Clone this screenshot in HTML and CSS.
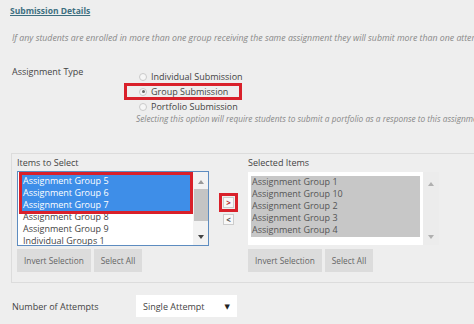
FILE: index.html
```html
<!DOCTYPE html>
<html>
<head>
<meta charset="utf-8">
<link rel="stylesheet" href="styles.css">
</head>
<body>
<div class="page">
  <div class="title"><a>Submission Details</a></div>
  <div class="intro">If any students are enrolled in more than one group receiving the same assignment they will submit more than one attempt for this assignment.</div>

  <div class="type-row">
    <div class="type-label">Assignment Type</div>
    <div class="options">
      <div class="opt"><span class="radio"></span>Individual Submission</div>
      <div class="opt sel"><span class="radio on"></span>Group Submission</div>
      <div class="opt"><span class="radio"></span>Portfolio Submission</div>
      <div class="hint">Selecting this option will require students to submit a portfolio as a response to this assignment.</div>
    </div>
  </div>

  <div class="panel">
    <div class="col">
      <div class="col-label">Items to Select</div>
      <div class="list left">
        <div class="items">
          <div class="hl-group">
            <div class="item hl">Assignment Group 5</div>
            <div class="item hl">Assignment Group 6</div>
            <div class="item hl">Assignment Group 7</div>
          </div>
          <div class="item">Assignment Group 8</div>
          <div class="item">Assignment Group 9</div>
          <div class="item">Individual Groups 1</div>
        </div>
        <div class="scroll">
          <span class="up"></span>
          <span class="thumb"></span>
          <span class="down dark"></span>
        </div>
      </div>
      <div class="btns">
        <span class="btn">Invert Selection</span>
        <span class="btn">Select All</span>
      </div>
    </div>
    <div class="arrows">
      <span class="arrow-wrap"><span class="arrow">&gt;</span></span>
      <span class="arrow plain">&lt;</span>
    </div>
    <div class="col">
      <div class="col-label">Selected Items</div>
      <div class="list right">
        <div class="white">
          <div class="grey-block">
            <div class="item">Assignment Group 1</div>
            <div class="item">Assignment Group 10</div>
            <div class="item">Assignment Group 2</div>
            <div class="item">Assignment Group 3</div>
            <div class="item">Assignment Group 4</div>
          </div>
        </div>
        <div class="scroll light">
          <span class="up"></span>
          <span class="down"></span>
        </div>
      </div>
      <div class="btns">
        <span class="btn">Invert Selection</span>
        <span class="btn">Select All</span>
      </div>
    </div>
  </div>

  <div class="attempts">
    <div class="att-label">Number of Attempts</div>
    <div class="select">Single Attempt<span class="caret">&#9660;</span></div>
  </div>
</div>
</body>
</html>
```
FILE: styles.css
```css
html, body {
  margin: 0;
  padding: 0;
  background: #eeeeee;
}
body {
  font-family: "Open Sans", "DejaVu Sans", sans-serif;
  font-size: 9px;
  color: #555;
  width: 474px;
  height: 324px;
  overflow: hidden;
}
.page {
  padding-top: 4px;
}
.title {
  padding-left: 10px;
  height: 14px;
  line-height: 14px;
}
.title a {
  font-weight: 700;
  color: #3d6e80;
  text-decoration: underline;
  font-size: 8.5px;
}
.intro {
  margin-top: 14px;
  padding-left: 12px;
  font-style: italic;
  color: #888;
  font-size: 8.75px;
  white-space: nowrap;
  line-height: 12px;
  overflow: hidden;
}
.type-row {
  display: flex;
  margin-top: 22px;
}
.type-label {
  width: 136px;
  flex: none;
  padding-left: 12px;
  box-sizing: border-box;
  line-height: 12px;
  color: #444;
}
.options {
  display: flex;
  flex-direction: column;
  padding-top: 3px;
  min-width: 0;
}
.opt {
  display: flex;
  align-items: center;
  height: 15px;
  padding-left: 3px;
  color: #444;
  white-space: nowrap;
}
.opt.sel {
  outline: 3px solid #d9202a;
  outline-offset: -3px;
  height: 17px;
  margin: -1px 0 -1px -12px;
  padding-left: 15px;
  width: 118px;
  box-sizing: border-box;
}
.radio {
  width: 6px;
  height: 6px;
  border: 1px solid #cacaca;
  border-radius: 50%;
  background: #f6f6f6;
  margin-right: 4px;
  position: relative;
  flex: none;
}
.radio.on::after {
  content: "";
  position: absolute;
  left: 1.5px;
  top: 1.5px;
  width: 3px;
  height: 3px;
  border-radius: 50%;
  background: #666;
}
.hint {
  font-style: italic;
  color: #888;
  white-space: nowrap;
  line-height: 10px;
  font-size: 8.3px;
}
.panel {
  margin: 29px 0 0 11px;
  border: 1px solid #dcdcdc;
  border-right: none;
  height: 130px;
  display: flex;
  padding: 3px 0 0 5px;
  box-sizing: border-box;
}
.col {
  display: flex;
  flex-direction: column;
}
.col-label {
  height: 12px;
  line-height: 12px;
  color: #444;
}
.list {
  margin-top: 2px;
  height: 75px;
  display: flex;
  box-sizing: border-box;
}
.list.left {
  width: 192px;
  border: 1px solid #5d8cc0;
  background: #fff;
}
.list.right {
  width: 192px;
  margin-top: 3px;
  height: 73px;
}
.items {
  flex: 1;
  padding: 3px 0 0 4px;
  overflow: hidden;
}
.item {
  height: 12px;
  line-height: 12px;
  white-space: nowrap;
  color: #444;
  padding-left: 1px;
}
.hl-group {
  outline: 3px solid #d9202a;
  background: #3e8ee8;
  margin: 0 3px 0 0;
}
.item.hl {
  color: #fff;
}
.white {
  width: 175px;
  flex: none;
  background: #fff;
  padding: 4px 3px 0 3px;
  box-sizing: border-box;
}
.grey-block {
  background: #c7c7c7;
  padding-bottom: 1px;
}
.grey-block .item {
  color: #555;
}
.scroll {
  width: 15px;
  flex: none;
  display: flex;
  flex-direction: column;
  align-items: center;
  background: #f2f2f2;
}
.scroll.light {
  background: #ececec;
  width: 16px;
}
.up {
  margin-top: 8px;
  width: 0;
  height: 0;
  border-left: 3.5px solid transparent;
  border-right: 3.5px solid transparent;
  border-bottom: 4px solid #999;
}
.scroll.light .up {
  margin-top: 10px;
  border-bottom-color: #b0b0b0;
}
.thumb {
  margin-top: 5px;
  width: 14px;
  height: 32px;
  background: #c4c4c4;
}
.down {
  margin-top: auto;
  margin-bottom: 6px;
  width: 0;
  height: 0;
  border-left: 3.5px solid transparent;
  border-right: 3.5px solid transparent;
  border-top: 4px solid #b0b0b0;
}
.down.dark {
  border-top-color: #444;
}
.btns {
  display: flex;
  gap: 3px;
  margin-top: 3px;
}
.right + .btns {
  margin-top: 4px;
}
.btn {
  height: 23px;
  line-height: 23px;
  background: #dcdcdc;
  color: #666;
  padding: 0 7px;
  font-size: 8.3px;
}
.arrows {
  width: 39px;
  flex: none;
  display: flex;
  flex-direction: column;
  align-items: center;
  padding-top: 36px;
  box-sizing: border-box;
}
.arrow-wrap {
  border: 3px solid #d9202a;
  padding: 1px;
  display: flex;
}
.arrow {
  width: 9px;
  height: 9px;
  border: 1px solid #ccc;
  background: #f8f8f8;
  color: #b03030;
  font-size: 8px;
  line-height: 9px;
  text-align: center;
  font-weight: 700;
}
.arrow.plain {
  margin-top: 2px;
  color: #555;
}
.attempts {
  display: flex;
  align-items: center;
  margin-top: 12px;
}
.att-label {
  width: 136px;
  padding-left: 12px;
  box-sizing: border-box;
  color: #444;
}
.select {
  width: 101px;
  height: 22px;
  background: #fff;
  display: flex;
  align-items: center;
  padding-left: 7px;
  box-sizing: border-box;
  color: #444;
  position: relative;
}
.caret {
  position: absolute;
  right: 7px;
  font-size: 7px;
  color: #222;
}
```
